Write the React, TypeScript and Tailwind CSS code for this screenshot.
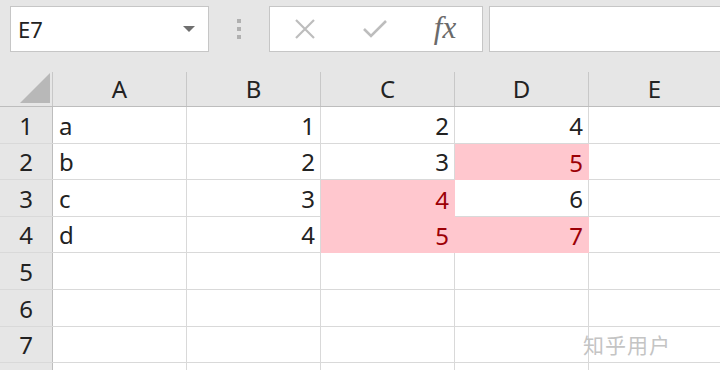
import React from 'react';

const cols = ['A', 'B', 'C', 'D', 'E'];

type Cell = { v?: string; num?: boolean; bad?: boolean };

const rows: Cell[][] = [
  [{ v: 'a' }, { v: '1', num: true }, { v: '2', num: true }, { v: '4', num: true }, {}],
  [{ v: 'b' }, { v: '2', num: true }, { v: '3', num: true }, { v: '5', num: true, bad: true }, {}],
  [{ v: 'c' }, { v: '3', num: true }, { v: '4', num: true, bad: true }, { v: '6', num: true }, {}],
  [{ v: 'd' }, { v: '4', num: true }, { v: '5', num: true, bad: true }, { v: '7', num: true, bad: true }, {}],
  [{}, {}, {}, {}, {}],
  [{}, {}, {}, {}, {}],
  [{}, {}, {}, {}, {}],
  [{}, {}, {}, {}, {}],
];

const font = { fontFamily: '"Noto Sans", "Noto Sans CJK SC", sans-serif' };

function Toolbar() {
  return (
    <div className="h-[72px] bg-[#e6e6e6] flex items-start pt-[6px] pl-[10px]">
      <div className="w-[199px] h-[46px] bg-white border border-[#c6c6c6] flex items-center justify-between pl-[7px] pr-[12px]">
        <span className="text-[22px] text-[#222]">E7</span>
        <svg width="14" height="8" viewBox="0 0 14 8">
          <path d="M1 1 L13 1 L7 7 Z" fill="#6f6f6f" />
        </svg>
      </div>
      <div className="w-[60px] h-[46px] flex flex-col items-center justify-center gap-[4px]">
        <span className="w-[4px] h-[4px] bg-[#b0b0b0]" />
        <span className="w-[4px] h-[4px] bg-[#b0b0b0]" />
        <span className="w-[4px] h-[4px] bg-[#b0b0b0]" />
      </div>
      <div className="w-[214px] h-[46px] bg-white border border-[#c6c6c6] flex items-center">
        <div className="w-[70px] flex justify-center">
          <svg width="22" height="22" viewBox="0 0 22 22">
            <path d="M2 2 L20 20 M20 2 L2 20" stroke="#bdbdbd" strokeWidth="2.2" />
          </svg>
        </div>
        <div className="w-[70px] flex justify-center">
          <svg width="26" height="20" viewBox="0 0 26 20">
            <path d="M2 10 L9 17 L24 2" stroke="#bdbdbd" strokeWidth="2.6" fill="none" />
          </svg>
        </div>
        <div className="w-[70px] flex justify-center">
          <span
            className="text-[31px] italic text-[#6a6a6a] leading-none -mt-[4px]"
            style={{ fontFamily: '"Liberation Serif", serif' }}
          >
            fx
          </span>
        </div>
      </div>
      <div className="ml-[6px] flex-1 h-[46px] bg-white border border-[#c6c6c6] border-r-0" />
    </div>
  );
}

export default function App() {
  return (
    <div className="w-[720px] h-[370px] overflow-hidden bg-white relative" style={font}>
      <Toolbar />
      <div className="flex h-[35px] bg-[#e6e6e6] border-b border-[#bdbdbd]">
        <div className="w-[53px] shrink-0 border-r border-[#c8c8c8] relative">
          <svg className="absolute left-[20px] top-[1px]" width="30" height="30" viewBox="0 0 30 30">
            <path d="M0 30 L30 30 L30 0 Z" fill="#b8b8b8" />
          </svg>
        </div>
        {cols.map((c, i) => (
          <div
            key={c}
            className={`${i < 4 ? 'w-[134px] border-r border-[#c8c8c8]' : 'flex-1'} shrink-0 flex items-center justify-center text-[24px] text-[#222]`}
          >
            {c}
          </div>
        ))}
      </div>
      {rows.map((r, ri) => (
        <div key={ri} className="flex h-[36.6px] border-b border-[#d9d9d9]">
          <div className="w-[53px] shrink-0 bg-[#e6e6e6] border-r border-[#bdbdbd] flex items-end justify-center pb-[1px] text-[24px] text-[#222] leading-[32px]">
            {ri < 7 ? ri + 1 : ''}
          </div>
          {r.map((cell, ci) => (
            <div
              key={ci}
              className={`${ci < 4 ? 'w-[134px] border-r' : 'flex-1'} shrink-0 flex items-end pb-[1px] text-[24px] leading-[32px] ${
                cell.bad ? 'bg-[#ffc7ce] text-[#9c0006] border-[#ffc7ce] -mb-px z-10' : 'text-[#222] border-[#d9d9d9]'
              } ${cell.num ? 'justify-end pr-[5px]' : 'justify-start pl-[6px]'}`}
            >
              {cell.v}
            </div>
          ))}
        </div>
      ))}
      <div className="absolute left-[583px] top-[330px] text-[21px] text-[#c4c4c4] tracking-[1px]">知乎用户</div>
    </div>
  );
}
